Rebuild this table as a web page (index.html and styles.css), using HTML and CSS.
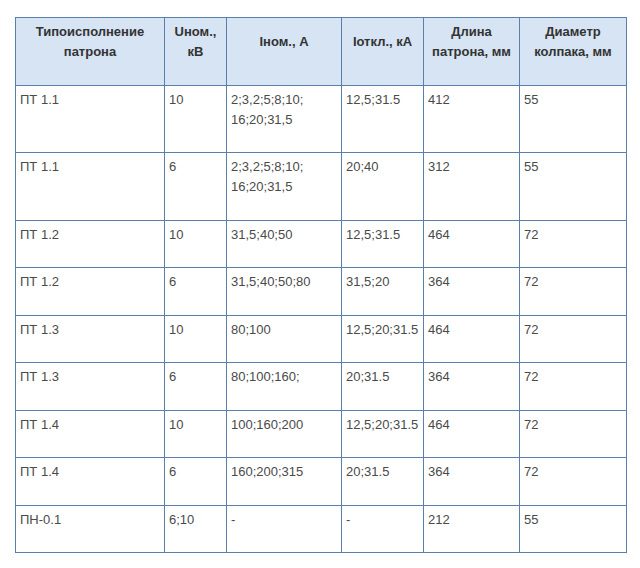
FILE: index.html
```html
<!DOCTYPE html>
<html lang="ru">
<head>
<meta charset="utf-8">
<link rel="stylesheet" href="styles.css">
</head>
<body>
<table class="spec">
  <colgroup>
    <col class="c1"><col class="c2"><col class="c3"><col class="c4"><col class="c5"><col class="c6">
  </colgroup>
  <thead>
    <tr>
      <th>Типоисполнение патрона</th>
      <th>Uном., кВ</th>
      <th>Iном., А</th>
      <th>Iоткл., кА</th>
      <th>Длина патрона, мм</th>
      <th>Диаметр колпака, мм</th>
    </tr>
  </thead>
  <tbody>
    <tr><td>ПТ 1.1</td><td>10</td><td>2;3,2;5;8;10;<br>16;20;31,5</td><td>12,5;31.5</td><td>412</td><td>55</td></tr>
    <tr><td>ПТ 1.1</td><td>6</td><td>2;3,2;5;8;10;<br>16;20;31,5</td><td>20;40</td><td>312</td><td>55</td></tr>
    <tr><td>ПТ 1.2</td><td>10</td><td>31,5;40;50</td><td>12,5;31.5</td><td>464</td><td>72</td></tr>
    <tr><td>ПТ 1.2</td><td>6</td><td>31,5;40;50;80</td><td>31,5;20</td><td>364</td><td>72</td></tr>
    <tr><td>ПТ 1.3</td><td>10</td><td>80;100</td><td>12,5;20;31.5</td><td>464</td><td>72</td></tr>
    <tr><td>ПТ 1.3</td><td>6</td><td>80;100;160;</td><td>20;31.5</td><td>364</td><td>72</td></tr>
    <tr><td>ПТ 1.4</td><td>10</td><td>100;160;200</td><td>12,5;20;31.5</td><td>464</td><td>72</td></tr>
    <tr><td>ПТ 1.4</td><td>6</td><td>160;200;315</td><td>20;31.5</td><td>364</td><td>72</td></tr>
    <tr><td>ПН-0.1</td><td>6;10</td><td>-</td><td>-</td><td>212</td><td>55</td></tr>
  </tbody>
</table>
</body>
</html>
```

FILE: styles.css
```css
html, body {
  margin: 0;
  padding: 0;
  background: #ffffff;
}
body {
  font-family: "Liberation Sans", Arial, sans-serif;
  font-size: 13px;
  line-height: 20px;
  color: #4a4a4a;
}
.spec {
  border-collapse: collapse;
  table-layout: fixed;
  width: 611px;
  margin: 17px 0 0 15px;
}
.c1 { width: 149px; }
.c2 { width: 62px; }
.c3 { width: 115px; }
.c4 { width: 82px; }
.c5 { width: 96px; }
.c6 { width: 107px; }
.spec th,
.spec td {
  border: 1px solid #5b7fab;
  padding: 4px 4px 22.5px 4px;
  text-align: left;
  vertical-align: top;
  white-space: nowrap;
}
.spec th {
  background: #d6e4f4;
  color: #333333;
  font-weight: bold;
  text-align: center;
  vertical-align: middle;
  white-space: normal;
}
```
